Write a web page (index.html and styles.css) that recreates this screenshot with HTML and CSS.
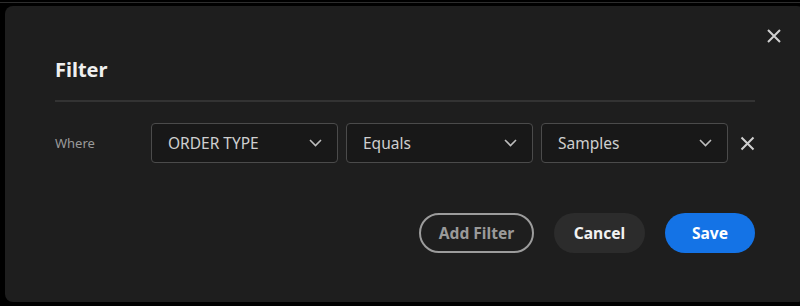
FILE: index.html
```html
<!DOCTYPE html>
<html lang="en">
<head>
<meta charset="utf-8">
<title>Filter</title>
<link rel="stylesheet" href="styles.css">
</head>
<body>
<div class="backdrop-line"></div>
<div class="modal">
  <button class="close" aria-label="Close">
    <svg width="14" height="14" viewBox="0 0 14 14"><path d="M1 1L13 13M13 1L1 13" stroke="#cfcfcf" stroke-width="2" fill="none"/></svg>
  </button>
  <h2 class="title">Filter</h2>
  <div class="divider"></div>
  <div class="row">
    <span class="label">Where</span>
    <div class="selects">
      <div class="select"><span>ORDER TYPE</span><svg class="chev" width="13" height="8" viewBox="0 0 13 8"><path d="M1 1L6.5 6.5L12 1" stroke="#bdbdbd" stroke-width="1.6" fill="none"/></svg></div>
      <div class="select"><span>Equals</span><svg class="chev" width="13" height="8" viewBox="0 0 13 8"><path d="M1 1L6.5 6.5L12 1" stroke="#bdbdbd" stroke-width="1.6" fill="none"/></svg></div>
      <div class="select"><span>Samples</span><svg class="chev" width="13" height="8" viewBox="0 0 13 8"><path d="M1 1L6.5 6.5L12 1" stroke="#bdbdbd" stroke-width="1.6" fill="none"/></svg></div>
    </div>
    <button class="remove" aria-label="Remove">
      <svg width="15" height="15" viewBox="0 0 15 15"><path d="M1.5 1.5L13.5 13.5M13.5 1.5L1.5 13.5" stroke="#d0d0d0" stroke-width="2" fill="none"/></svg>
    </button>
  </div>
  <div class="actions">
    <button class="btn btn-outline">Add Filter</button>
    <button class="btn btn-secondary">Cancel</button>
    <button class="btn btn-primary">Save</button>
  </div>
</div>
</body>
</html>
```
FILE: styles.css
```css
html, body {
  margin: 0;
  padding: 0;
  background: #000;
  overflow: hidden;
  font-family: "Noto Sans", Lato, sans-serif;
}
.backdrop-line {
  height: 1px;
  margin-top: 2px;
  background: #2e2e2e;
}
.modal {
  position: relative;
  margin: 3px 0 0 5px;
  width: 800px;
  height: 296px;
  box-sizing: border-box;
  padding: 52px 50px 0 50px;
  background: #1e1e1e;
  border-radius: 8px;
}
.close {
  position: absolute;
  top: 23px;
  left: 762px;
  width: 14px;
  height: 14px;
  padding: 0;
  border: 0;
  background: none;
  display: flex;
}
.title {
  margin: 0;
  font-size: 20px;
  line-height: 24px;
  font-weight: 700;
  color: #efefef;
}
.divider {
  margin-top: 18px;
  height: 2px;
  width: 700px;
  background: #333;
}
.row {
  margin-top: 21px;
  width: 700px;
  display: flex;
  align-items: center;
}
.label {
  width: 96px;
  flex: none;
  font-size: 13px;
  color: #9a9a9a;
}
.selects {
  display: flex;
  gap: 8px;
}
.select {
  width: 187px;
  height: 40px;
  box-sizing: border-box;
  border: 1px solid #4b4b4b;
  border-radius: 4px;
  background: #181818;
  display: flex;
  align-items: center;
  justify-content: space-between;
  padding: 0 15px 0 16px;
  font-size: 15.5px;
  color: #cfcfcf;
}
.chev { flex: none; }
.remove {
  margin-left: 12px;
  width: 15px;
  height: 15px;
  padding: 0;
  border: 0;
  background: none;
  display: flex;
}
.actions {
  margin-top: 50px;
  width: 700px;
  display: flex;
  justify-content: flex-end;
  gap: 20px;
}
.btn {
  height: 40px;
  box-sizing: border-box;
  border-radius: 20px;
  font-family: "Noto Sans", Lato, sans-serif;
  font-weight: 700;
  font-size: 15.6px;
  border: 0;
  padding: 0;
}
.btn-outline {
  width: 115px;
  border: 2px solid #9c9c9c;
  background: transparent;
  color: #9a9a9a;
}
.btn-secondary {
  width: 91px;
  background: #2c2c2c;
  color: #f2f2f2;
}
.btn-primary {
  width: 90px;
  background: #1473e6;
  color: #fff;
}
```
